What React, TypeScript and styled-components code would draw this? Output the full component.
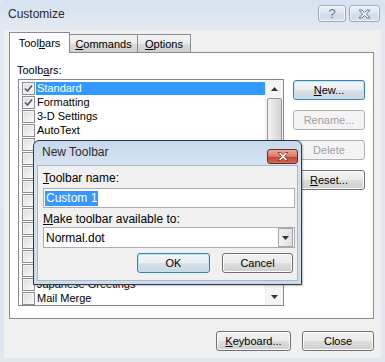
import React from 'react';
import styled, { createGlobalStyle, css } from 'styled-components';

const Global = createGlobalStyle`
  html, body { margin: 0; padding: 0; }
  body {
    width: 385px; height: 362px; overflow: hidden; background: #dfe7f1;
    font-family: "Liberation Sans", Arial, sans-serif; font-size: 11px; color: #000;
  }
`;

const Window = styled.div`
  position: relative;
  width: 385px; height: 362px; box-sizing: border-box;
  display: flex; flex-direction: column;
  background: linear-gradient(#d6e2f0, #e2e9f3 30px, #dfe7f1);
  border-radius: 6px 6px 0 0;
  padding: 0 4px 4px 4px;
  overflow: hidden;
`;

const TitleBar = styled.div`
  height: 30px; flex: none;
  display: flex; align-items: center;
  padding: 0 0 0 4px;
`;

const Title = styled.span<{ $size?: number }>`
  flex: 1;
  font-size: ${p => p.$size ?? 12}px;
  color: #2a2a2a;
  padding-bottom: 2px;
`;

const CaptionButtons = styled.div`
  display: flex; gap: 3px; align-self: flex-start; margin-top: 5px; margin-right: 1px;
`;

const CaptionBtn = styled.div<{ $w: number }>`
  width: ${p => p.$w}px; height: 17px; box-sizing: border-box;
  border: 1px solid #9aa8b8; border-radius: 3px;
  background: linear-gradient(#e9eff6, #dbe4ee 50%, #cfdae6 51%, #d8e1eb);
  box-shadow: inset 0 0 0 1px rgba(255,255,255,0.6);
  display: flex; align-items: center; justify-content: center;
  color: #6b7684; font-size: 13px; line-height: 1;
`;

const Client = styled.div`
  flex: 1; display: flex; flex-direction: column;
  background: #f0f0f0;
  padding: 2px 7px 0 5px;
`;

const Tabs = styled.div`
  display: flex; height: 20px; align-items: flex-end; position: relative; z-index: 1;
`;

const Tab = styled.div<{ $active?: boolean; $w: number }>`
  width: ${p => p.$w}px; box-sizing: border-box;
  border: 1px solid #898c95; border-bottom: none;
  margin-left: -1px;
  &:first-child { margin-left: 0; }
  display: flex; align-items: center; justify-content: center;
  ${p => p.$active ? css`
    height: 21px; margin-bottom: -1px; background: #fff; z-index: 2; padding-bottom: 1px;
  ` : css`
    height: 18px; background: linear-gradient(#f3f3f3, #ebebeb 50%, #dddddd 51%, #cfcfcf);
  `}
`;

const Panel = styled.div`
  height: 267px; box-sizing: border-box;
  border: 1px solid #898c95; background: #fff;
  display: flex; gap: 9px;
  padding: 11px 0 0 8px;
`;

const LeftCol = styled.div`
  display: flex; flex-direction: column;
`;

const FieldLabel = styled.div`
  line-height: 13px; height: 13px; margin: 0 0 2px -1px;
`;

const ListBox = styled.div`
  width: 266px; height: 227px; box-sizing: border-box;
  border: 1px solid #828790; background: #fff;
  display: flex;
`;

const Items = styled.div`
  flex: 1; padding-top: 1px; display: flex; flex-direction: column; overflow: hidden;
`;

const Row = styled.div`
  height: 14px; flex: none; display: flex; align-items: center; padding-left: 3px;
`;

const Check = styled.span`
  width: 13px; height: 13px; box-sizing: border-box; flex: none;
  border: 1px solid #8f8f8f;
  background: linear-gradient(135deg, #dcdcdc, #fbfbfb);
  box-shadow: inset 0 0 0 1px #f4f4f4;
  display: flex; align-items: center; justify-content: center;
`;

const ItemText = styled.span<{ $sel?: boolean }>`
  margin-left: 1px; padding: 0 1px; line-height: 13px; height: 13px;
  white-space: nowrap;
  ${p => p.$sel ? css`flex: 1; background: #3399ff; color: #fff;` : css`color: #000;`}
`;

const ScrollBar = styled.div`
  width: 17px; flex: none; display: flex; flex-direction: column;
  background: #f4f4f4; border-left: 1px solid #ececec;
`;

const Arrow = styled.div`
  height: 17px; flex: none; display: flex; align-items: center; justify-content: center;
`;

const Track = styled.div`
  flex: 1; padding: 1px 0; display: flex; flex-direction: column;
`;

const Thumb = styled.div`
  height: 60px; margin: 0 1px; box-sizing: border-box;
  border: 1px solid #979797; border-radius: 2px;
  background: linear-gradient(90deg, #f3f3f3, #e2e2e2 50%, #d3d3d3);
`;

const RightCol = styled.div`
  display: flex; flex-direction: column; gap: 10px; padding-top: 16px;
`;

const Btn = styled.div<{ $w: number; $kind?: 'default' | 'normal' | 'disabled' }>`
  width: ${p => p.$w}px; height: 20px; box-sizing: border-box; flex: none;
  border-radius: 3px;
  display: flex; align-items: center; justify-content: center;
  font-size: 11px;
  ${p => p.$kind === 'default' ? css`
    border: 1px solid #3c7fb1;
    background: linear-gradient(#f3f6f8, #e9eef2 50%, #d9e1e8 51%, #ccd6df);
    box-shadow: inset 0 0 0 1px #bfe3fa;
    color: #000;
  ` : p.$kind === 'disabled' ? css`
    border: 1px solid #adb2b5;
    background: #f4f4f4;
    color: #a0a0a0;
  ` : css`
    border: 1px solid #707070;
    background: linear-gradient(#f2f2f2, #ebebeb 50%, #dddddd 51%, #cfcfcf);
    box-shadow: inset 0 0 0 1px #fcfcfc;
    color: #000;
  `}
`;

const Footer = styled.div`
  display: flex; justify-content: flex-end; gap: 11px; margin-top: 12px;
`;

const Dialog = styled.div`
  position: absolute; left: 33px; top: 140px;
  width: 269px; height: 145px; box-sizing: border-box;
  border: 1px solid #2b3a4c; border-radius: 6px 6px 0 0;
  background: linear-gradient(#c7d8ec, #d6e2f0 24px, #cddbea);
  padding: 0 3px 3px 3px;
  display: flex; flex-direction: column;
  box-shadow: 1px 1px 2px rgba(0,0,0,0.25);
`;

const DialogTitle = styled.div`
  height: 24px; flex: none; display: flex; align-items: center; padding-left: 5px;
`;

const RedClose = styled.div`
  width: 31px; height: 15px; box-sizing: border-box; align-self: flex-start; margin-top: 8px; margin-right: 0px;
  border: 1px solid #6e2d22; border-radius: 3px;
  background: linear-gradient(#e9a99b, #d67a66 50%, #c2442c 51%, #cf6b52);
  display: flex; align-items: center; justify-content: center;
`;

const DialogBody = styled.div`
  flex: 1; background: #f0f0f0;
  border: 1px solid #a9b8c9;
  padding: 6px 0 0 5px;
  display: flex; flex-direction: column;
`;

const TextBox = styled.div`
  width: 252px; height: 20px; box-sizing: border-box;
  border: 1px solid #abadb3; background: #fff;
  display: flex; align-items: center; padding-left: 1px;
  margin-top: 3px;
`;

const Selected = styled.span`
  background: #3399ff; color: #fff; padding: 0 1px; line-height: 15px; font-size: 12px;
`;

const SelectBox = styled.div`
  width: 252px; height: 21px; box-sizing: border-box;
  border: 1px solid #abadb3; background: #fff;
  display: flex; align-items: center;
  margin-top: 1px; font-size: 12px;
`;

const SelectText = styled.span`
  flex: 1; padding-left: 2px;
`;

const DropBtn = styled.div`
  width: 15px; height: 19px; box-sizing: border-box;
  border: 1px solid #a6a6a6;
  background: linear-gradient(90deg, #f2f2f2, #e0e0e0);
  display: flex; align-items: center; justify-content: center;
  margin-right: 1px;
`;

const DialogLabel = styled.div<{ $mt: number }>`
  line-height: 13px; margin-top: ${p => p.$mt}px; font-size: 12px;
`;

const DialogButtons = styled.div`
  display: flex; gap: 12px; margin-top: 5px; padding-left: 94px;
`;

const Tri = ({ up }: { up?: boolean }) => (
  <svg width="7" height="4" viewBox="0 0 7 4">
    <path d={up ? 'M0 4 L3.5 0 L7 4 Z' : 'M0 0 L7 0 L3.5 4 Z'} fill="#333" />
  </svg>
);

const CheckMark = () => (
  <svg width="9" height="9" viewBox="0 0 9 9">
    <path d="M1 4.5 L3.5 7 L8 1.5" fill="none" stroke="#4c5a78" strokeWidth="1.6" />
  </svg>
);

const rows: { name: string; checked?: boolean; sel?: boolean }[] = [
  { name: 'Standard', checked: true, sel: true },
  { name: 'Formatting', checked: true },
  { name: '3-D Settings' },
  { name: 'AutoText' },
  { name: 'Control Toolbox' },
  { name: 'Database' },
  { name: 'Drawing' },
  { name: 'E-mail' },
  { name: 'Extended Formatting' },
  { name: 'Forms' },
  { name: 'Frames' },
  { name: 'Function Key Display' },
  { name: 'Ink Annotations' },
  { name: 'Ink Comment' },
  { name: 'Japanese Greetings' },
  { name: 'Mail Merge' },
];

export default function App() {
  return (
    <>
      <Global />
      <Window>
        <TitleBar>
          <Title>Customize</Title>
          <CaptionButtons>
            <CaptionBtn $w={28}>?</CaptionBtn>
            <CaptionBtn $w={31}>
              <svg width="13" height="10" viewBox="0 0 13 10">
                <path d="M1 1 L4 1 L6.5 3.5 L9 1 L12 1 L8.5 5 L12 9 L9 9 L6.5 6.5 L4 9 L1 9 L4.5 5 Z" fill="#e9eef4" stroke="#6f7a88" strokeWidth="1" />
              </svg>
            </CaptionBtn>
          </CaptionButtons>
        </TitleBar>
        <Client>
          <Tabs>
            <Tab $active $w={61}>Tool<u>b</u>ars</Tab>
            <Tab $w={69}><u>C</u>ommands</Tab>
            <Tab $w={54}><u>O</u>ptions</Tab>
          </Tabs>
          <Panel>
            <LeftCol>
              <FieldLabel>Toolb<u>a</u>rs:</FieldLabel>
              <ListBox>
                <Items>
                  {rows.map(r => (
                    <Row key={r.name}>
                      <Check>{r.checked && <CheckMark />}</Check>
                      <ItemText $sel={r.sel}>{r.name}</ItemText>
                    </Row>
                  ))}
                </Items>
                <ScrollBar>
                  <Arrow><Tri up /></Arrow>
                  <Track><Thumb /></Track>
                  <Arrow><Tri /></Arrow>
                </ScrollBar>
              </ListBox>
            </LeftCol>
            <RightCol>
              <Btn $w={72} $kind="default"><u>N</u>ew...</Btn>
              <Btn $w={72} $kind="disabled">Rename...</Btn>
              <Btn $w={72} $kind="disabled">Delete</Btn>
              <Btn $w={72}><u>R</u>eset...</Btn>
            </RightCol>
          </Panel>
          <Footer>
            <Btn $w={75}><u>K</u>eyboard...</Btn>
            <Btn $w={72}>Close</Btn>
          </Footer>
        </Client>

        <Dialog>
          <DialogTitle>
            <Title $size={12}>New Toolbar</Title>
            <RedClose>
              <svg width="12" height="9" viewBox="0 0 12 9">
                <path d="M1 0.5 L3.8 0.5 L6 2.7 L8.2 0.5 L11 0.5 L7.6 4.5 L11 8.5 L8.2 8.5 L6 6.3 L3.8 8.5 L1 8.5 L4.4 4.5 Z" fill="#fff" stroke="#7a2a1c" strokeWidth="0.8" />
              </svg>
            </RedClose>
          </DialogTitle>
          <DialogBody>
            <DialogLabel $mt={0}><u>T</u>oolbar name:</DialogLabel>
            <TextBox><Selected>Custom 1</Selected></TextBox>
            <DialogLabel $mt={5}><u>M</u>ake toolbar available to:</DialogLabel>
            <SelectBox>
              <SelectText>Normal.dot</SelectText>
              <DropBtn><Tri /></DropBtn>
            </SelectBox>
            <DialogButtons>
              <Btn $w={73} $kind="default">OK</Btn>
              <Btn $w={71}>Cancel</Btn>
            </DialogButtons>
          </DialogBody>
        </Dialog>
      </Window>
    </>
  );
}
